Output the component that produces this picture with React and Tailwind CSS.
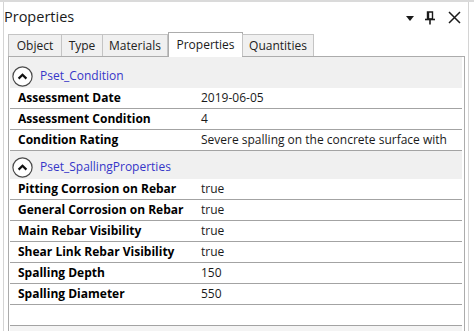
import React from 'react';

const groups = [
  {
    name: 'Pset_Condition',
    first: true,
    rows: [
      ['Assessment Date', '2019-06-05'],
      ['Assessment Condition', '4'],
      ['Condition Rating', 'Severe spalling on the concrete surface with'],
    ],
  },
  {
    name: 'Pset_SpallingProperties',
    rows: [
      ['Pitting Corrosion on Rebar', 'true'],
      ['General Corrosion on Rebar', 'true'],
      ['Main Rebar Visibility', 'true'],
      ['Shear Link Rebar Visibility', 'true'],
      ['Spalling Depth', '150'],
      ['Spalling Diameter', '550'],
      ['', ''],
    ],
  },
];

const tabs = [
  { name: 'Object', cls: 'w-[54px]' },
  { name: 'Type', cls: 'w-[42px] -ml-[1px]' },
  { name: 'Materials', cls: 'w-[66px] -ml-[1px]' },
  { name: 'Properties', cls: 'w-[75px] ml-[0px]', active: true },
  { name: 'Quantities', cls: 'w-[72px] -ml-[1px]' },
];

const CollapseIcon = () => (
  <svg width="21" height="21" viewBox="0 0 21 21">
    <circle cx="10.5" cy="10.5" r="9.6" fill="white" stroke="#4a4a4a" strokeWidth="1.2" />
    <path d="M6.6 12.6 L10.5 8.7 L14.4 12.6" fill="none" stroke="#111" strokeWidth="2.2" />
  </svg>
);

const TitleIcons = () => (
  <div className="flex items-center mr-[7px]">
    <svg width="10" height="8" viewBox="0 0 10 8" className="mr-[9px]">
      <polygon points="1,2 9,2 5,7" fill="#1a1a1a" />
    </svg>
    <svg width="12" height="14" viewBox="0 0 12 14" className="mr-[12px]">
      <path d="M3.5 1 H8.5 V8 H3.5 Z" fill="none" stroke="#1a1a1a" strokeWidth="1.4" />
      <path d="M4.5 1 V8" stroke="#1a1a1a" strokeWidth="1.4" />
      <path d="M1 8.5 H11" stroke="#1a1a1a" strokeWidth="1.6" />
      <path d="M6 8.5 V13.5" stroke="#1a1a1a" strokeWidth="1.6" />
    </svg>
    <svg width="13" height="13" viewBox="0 0 13 13">
      <path d="M1 1 L12 12 M12 1 L1 12" stroke="#1a1a1a" strokeWidth="1.5" />
    </svg>
  </div>
);

const App = () => {
  return (
    <div className="w-[474px] h-[331px] bg-white overflow-hidden font-['Open_Sans',sans-serif] text-[#1a1a1a]">
      <div className="h-[2px] bg-[#dadada]" />
      <div className="ml-[3px] w-[466px] h-[329px] border-x border-[#d4d4d4] flex flex-col">
        <div className="h-[31px] shrink-0 flex items-center justify-between">
          <span className="text-[14.5px] leading-none">Properties</span>
          <TitleIcons />
        </div>

        <div className="ml-[4px] flex items-end h-[23px] shrink-0 relative z-10">
          {tabs.map((t) =>
            t.active ? (
              <div
                key={t.name}
                className={`${t.cls} h-[25px] bg-white border border-b-0 border-[#acacac] flex items-center justify-center text-[12px] -mb-[1px]`}
              >
                {t.name}
              </div>
            ) : (
              <div
                key={t.name}
                className={`${t.cls} h-[22px] bg-[#f0f0f0] border border-b-0 border-[#c4c4c4] flex items-center justify-center text-[12px] text-[#222]`}
              >
                {t.name}
              </div>
            )
          )}
        </div>

        <div className="ml-[4px] w-[457px] flex-1 border border-b-0 border-[#acacac] pl-[1px] pr-[2px]">
          {groups.map((g) => (
            <div key={g.name}>
              <div
                className={`${g.first ? 'h-[31px]' : 'h-[28px]'} bg-[#f0f0f0] flex items-end pb-[1px] pl-[2px]`}
              >
                <CollapseIcon />
                <span className="ml-[7px] mb-[2px] text-[12px] text-[#3636c8]">{g.name}</span>
              </div>
              {g.rows.map(([label, value], i) => (
                <div
                  key={g.name + i}
                  className="h-[21px] grid grid-cols-[190px_1fr] items-center border-b border-[#a3a3a3] bg-white"
                >
                  <span className="pl-[8px] text-[12px] font-bold text-black whitespace-nowrap">{label}</span>
                  <span className="pl-[1px] text-[12px] whitespace-nowrap overflow-hidden">{value}</span>
                </div>
              ))}
            </div>
          ))}
          <div className="h-[8px] bg-[#f4f4f4]" />
        </div>
      </div>
    </div>
  );
};

export default App;
